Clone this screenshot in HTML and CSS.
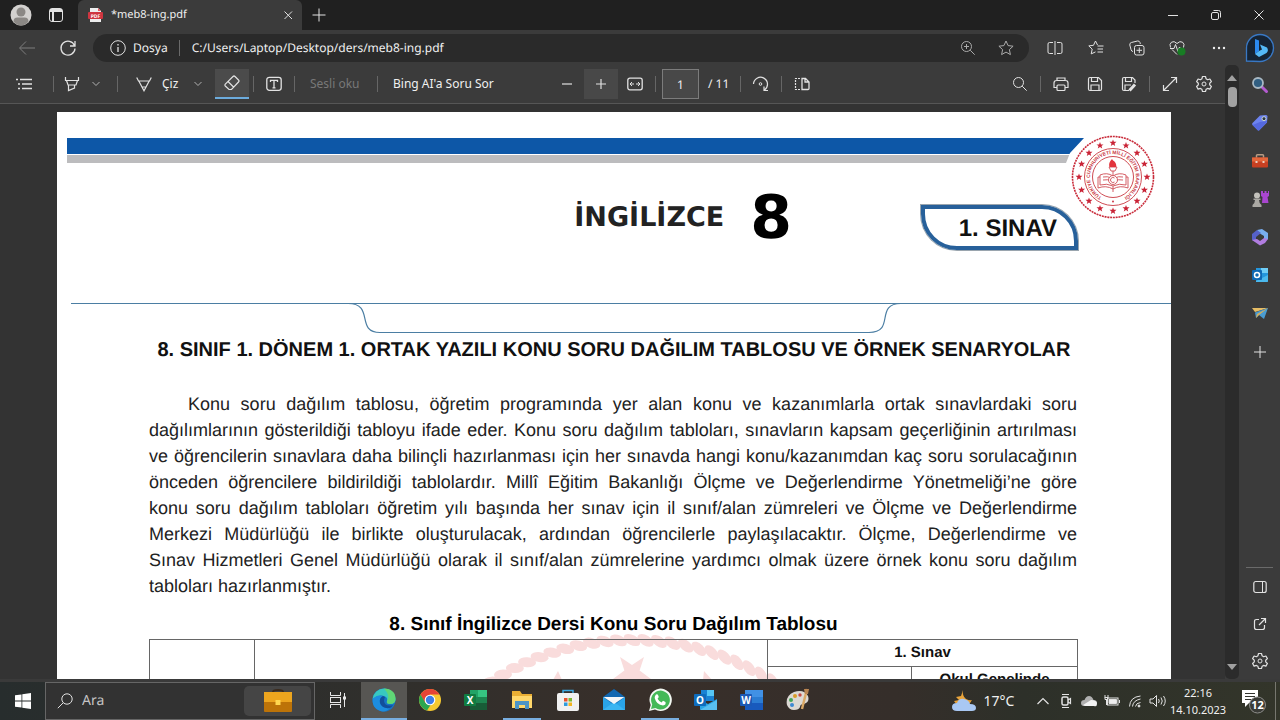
FILE: index.html
```html
<!DOCTYPE html>
<html lang="tr">
<head>
<meta charset="utf-8">
<title>*meb8-ing.pdf</title>
<link rel="stylesheet" href="styles.css">
</head>
<body>
<header class="titlebar">
  <button class="profile" aria-label="Profil"><svg width="22" height="22" viewBox="0 0 22 22"><circle cx="11" cy="11" r="10.500" fill="#d3d1cf"/><circle cx="11" cy="8" r="4.500" fill="#8b8885"/><path d="M3.500 17.500q0-4 4-4h7q4 0 4 4q-3 4-7.500 4t-7.500-4z" fill="#8b8885"/></svg></button>
  <button class="workspaces" aria-label="Sekme eylemleri"><svg class="ic" width="16" height="16" viewBox="0 0 16 16"><rect x="1.500" y="1.500" width="13" height="13" rx="2.500"/><path d="M2 3h12M2 4h12M5 4v10" stroke-width="2"/></svg></button>
  <div class="tab">
    <svg width="15" height="16" viewBox="0 0 15 16"><path d="M2 1h8l3 3v11H2z" fill="#eee"/><path d="M10 1v3h3z" fill="#e35b62"/><rect x="0" y="5" width="15" height="7" rx="1" fill="#cf3540"/><text x="7.500" y="10.500" class="pdf-mark">PDF</text></svg>
    <span class="tab-title">*meb8-ing.pdf</span>
    <button class="tab-close" aria-label="Sekmeyi kapat"><svg class="ic" width="16" height="16" viewBox="0 0 16 16"><path d="M4.500 4.500l7.500 7.500M12 4.500L4.500 12"/></svg></button>
  </div>
  <button class="new-tab" aria-label="Yeni sekme"><svg class="ic" width="16" height="16" viewBox="0 0 16 16"><path d="M8 1.500v13M1.500 8h13"/></svg></button>
  <div class="window-controls">
    <button aria-label="Küçült"><svg class="ic" width="12" height="12" viewBox="0 0 12 12"><path d="M1 6.500h10"/></svg></button>
    <button aria-label="Önceki boyut"><svg class="ic" width="12" height="12" viewBox="0 0 12 12"><rect x="1.500" y="3.500" width="7" height="7" rx="1.500"/><path d="M3.500 1.500h5q2 0 2 2v5"/></svg></button>
    <button aria-label="Kapat"><svg class="ic" width="12" height="12" viewBox="0 0 12 12"><path d="M1.500 1.500l9 9M10.500 1.500l-9 9"/></svg></button>
  </div>
</header>

<nav class="address-row">
  <button class="nav-btn back" aria-label="Geri"><svg class="ic" width="18" height="16" viewBox="0 0 18 16"><path d="M17 8H2M8 1.500L1.500 8L8 14.500"/></svg></button>
  <button class="nav-btn" aria-label="Yenile"><svg class="ic" width="18" height="18" viewBox="0 0 18 18"><path d="M15.500 6.500A7 7 0 1 0 16 9.500M16 2v5h-5" stroke-width="1.300"/></svg></button>
  <div class="omnibox">
    <svg class="ic" width="16" height="16" viewBox="0 0 16 16"><circle cx="8" cy="8" r="7.300"/><path d="M8 7v5M8 4v1.500" stroke-width="1.300"/></svg>
    <label class="scheme" for="url">Dosya</label>
    <input id="url" class="url" value="C:/Users/Laptop/Desktop/ders/meb8-ing.pdf">
    <button class="dim" aria-label="Yakınlaştır"><svg class="ic" width="16" height="16" viewBox="0 0 16 16"><circle cx="6.500" cy="6.500" r="5"/><path d="M10.200 10.200l4.500 4.500M6.500 4v5M4 6.500h5"/></svg></button>
    <button class="dim" aria-label="Sık kullanılanlara ekle"><svg class="ic" width="16" height="16" viewBox="0 0 16 16"><path d="M8 1l2.100 4.600 5 .6-3.700 3.400 1 5L8 12.100 3.600 14.600l1-5L.9 6.200l5-.6z"/></svg></button>
  </div>
  <div class="browser-tools">
    <button aria-label="Bölünmüş ekran"><svg class="ic" width="16" height="16" viewBox="0 0 16 16"><path d="M6 2.500H2.500q-1.500 0-1.500 1.500v8q0 1.500 1.500 1.500H6M10 2.500h3.500q1.500 0 1.500 1.500v8q0 1.500-1.500 1.500H10M8 1v14"/></svg></button>
    <button aria-label="Sık kullanılanlar"><svg class="ic" width="16" height="16" viewBox="0 0 16 16"><path d="M9.500 5L7.500 1 5.500 5.300.8 5.900l3.400 3.200-1 4.800 4.300-2M9.500 6h6M9.500 9h5.500M9.500 12h5.500"/></svg></button>
    <button aria-label="Koleksiyonlar"><svg class="ic" width="16" height="16" viewBox="0 0 16 16"><rect x="5.500" y="5.500" width="9.500" height="9.500" rx="2"/><path d="M10.300 7.500v5.500M7.500 10.300h5.500M4 11.500Q2.500 11.500 2 9.500L.8 5Q.5 3 2.300 2.500L8.500 1Q10.500.8 11 2.500L11.300 4"/></svg></button>
    <button aria-label="Tarayıcı temel parçaları"><svg class="ic" width="17" height="16" viewBox="0 0 17 16"><path d="M1.500 7.500Q0 4 2.500 2.200T8 3.500Q11 .5 13.500 2.200T14.500 7.500M3 9.500l5 5M1 8.500h4l1.500-4 2.500 7 1.500-4.500 1 1.500H15"/><circle cx="12.500" cy="11.500" r="4" fill="#187d24" stroke="none"/></svg></button>
    <button aria-label="Ayarlar ve daha fazlası"><svg width="16" height="16" viewBox="0 0 16 16" fill="#eee"><circle cx="3" cy="8" r="1.200"/><circle cx="8" cy="8" r="1.200"/><circle cx="13" cy="8" r="1.200"/></svg></button>
  </div>
  <button class="bing" aria-label="Bing Sohbet"><svg width="30" height="30" viewBox="0 0 30 30"><path d="M1.500 28V15A13.500 13.500 0 1 1 15 28.500z" fill="#162434" stroke="#3978c4" stroke-width="1.300"/><path d="M10 6l4 1.500V18l-4 3z" fill="#2b8af0"/><path d="M10 21l4-3 3-1.500-2-5 7 3q2 3-.5 5.500L14 24z" fill="#54b9f7"/></svg></button>
</nav>

<div class="workspace">
  <main class="viewer">
    <div class="pdfbar">
      <button class="tool" aria-label="İçindekiler"><svg class="ic" width="18" height="14" viewBox="0 0 18 14"><path d="M5 2.500h12M7 7h10M7 11.500h10M1 2.500h2M3 7h2M3 11.500h2" stroke-width="1.300"/></svg></button>
      <span class="sep wide-left"></span>
      <button class="tool narrow" aria-label="Vurgula"><svg class="ic" width="16" height="16" viewBox="0 0 16 16"><path d="M1.500 1v3.500h13V1M2.500 4.500l1.500 4.500h8l1.500-4.500M4.500 9v5.500l6-2.500V9" stroke-width="1.200"/></svg></button>
      <button class="chev" aria-label="Vurgu rengi"><svg class="ic" width="8" height="8" viewBox="0 0 8 8"><path d="M.5 2l3.500 3.500L7.500 2"/></svg></button>
      <span class="sep wide-left wide-right"></span>
      <button class="draw"><svg class="ic" width="16" height="16" viewBox="0 0 16 16"><path d="M.7 1.500l1.800 3.500h11l1.800-3.500M2.800 5L8 14.800 13.200 5M6 11h4" stroke-width="1.200"/></svg>Çiz</button>
      <button class="chev" aria-label="Kalem seçenekleri"><svg class="ic" width="8" height="8" viewBox="0 0 8 8"><path d="M.5 2l3.500 3.500L7.500 2"/></svg></button>
      <button class="tool eraser" aria-label="Sil"><svg class="ic" width="16" height="16" viewBox="0 0 16 16"><path d="M1.300 9.200L9 1.500q1-1 2 0l3.500 3.500q1 1 0 2L7.500 14.500H5L1.300 11q-.8-.9 0-1.800zM4 6.500l5.500 5.500" stroke-width="1.200"/></svg></button>
      <span class="sep"></span>
      <button class="tool" aria-label="Metin ekle"><svg class="ic" width="16" height="16" viewBox="0 0 16 16"><rect x=".8" y="1.300" width="14.400" height="13" rx="2.500" stroke-width="1.300"/><path d="M4.500 6V4.300h7V6M8 4.300v7.500M6.500 11.800h3" stroke-width="1.300"/></svg></button>
      <span class="sep"></span>
      <button class="label read" disabled>Sesli oku</button>
      <span class="sep"></span>
      <button class="label ask">Bing AI'a Soru Sor</button>
      <div class="zoom-group">
        <button class="tool" aria-label="Uzaklaştır"><svg class="ic" width="12" height="12" viewBox="0 0 12 12"><path d="M1 6h10" stroke-width="1.200"/></svg></button>
        <button class="tool hover" aria-label="Yakınlaştır"><svg class="ic" width="12" height="12" viewBox="0 0 12 12"><path d="M1 6h10M6 1v10" stroke-width="1.200"/></svg></button>
        <button class="tool" aria-label="Sayfaya sığdır"><svg class="ic" width="16" height="14" viewBox="0 0 16 14"><rect x=".8" y="1.200" width="14.400" height="11.600" rx="2" stroke-width="1.300"/><path d="M3 7h4M9 7h4M5 5L3 7l2 2M11 5l2 2-2 2"/></svg></button>
        <span class="sep"></span>
        <input id="pg" class="page-no" value="1">
        <label class="page-count" for="pg">/ 11</label>
        <span class="sep"></span>
        <button class="tool" aria-label="Döndür"><svg class="ic" width="18" height="16" viewBox="0 0 18 16"><path d="M1.500 8A7 7 0 1 1 12.500 14M12 10.500v4h4" stroke-width="1.200"/><circle cx="8.500" cy="8" r="1.300"/></svg></button>
        <span class="sep"></span>
        <button class="tool" aria-label="Sayfa görünümü"><svg class="ic" width="16" height="14" viewBox="0 0 16 14"><path d="M8 1.500h3.500L15 5v6.500q0 1-1 1H8zM11 1.500V5h4" stroke-width="1.300"/><path d="M6 1.500H1.500v11H6" stroke-dasharray="2 1" stroke-width="1.200"/></svg></button>
      </div>
      <div class="file-group">
        <button class="tool" aria-label="Bul"><svg class="ic" width="16" height="16" viewBox="0 0 16 16"><circle cx="6.500" cy="6.500" r="5"/><path d="M10.200 10.200l4.500 4.500"/></svg></button>
        <span class="sep"></span>
        <button class="tool" aria-label="Yazdır"><svg class="ic" width="16" height="16" viewBox="0 0 16 16"><path d="M4 4.500V2h8v2.500M4 11.500H1V7q0-2.500 2.500-2.500h9Q15 4.500 15 7v4.500h-3" stroke-width="1.200"/><rect x="4" y="9" width="8" height="5.500" rx="1" stroke-width="1.200"/></svg></button>
        <button class="tool" aria-label="Kaydet"><svg class="ic" width="16" height="16" viewBox="0 0 16 16"><path d="M3 1.500h8.500l3 3V13q0 1.500-1.500 1.500H3q-1.500 0-1.500-1.500V3q0-1.500 1.500-1.500zM4.500 1.500v4h6v-4M4 14.500V9h8v5.500" stroke-width="1.200"/></svg></button>
        <button class="tool" aria-label="Farklı kaydet"><svg class="ic" width="16" height="16" viewBox="0 0 16 16"><path d="M8 14.500H3q-1.500 0-1.500-1.500V3q0-1.500 1.500-1.500h8.500l2.500 2.500v3M4.500 1.500v4h6v-4M4 14.500V9h6" stroke-width="1.200"/><path d="M8.500 14.500L14 8.500" stroke-width="3"/></svg></button>
        <span class="sep"></span>
        <button class="tool" aria-label="Tam ekran"><svg class="ic" width="16" height="16" viewBox="0 0 16 16"><path d="M2 14L14 2M9 1.500h5.500V7M1.500 9v5.500H7" stroke-width="1.200"/></svg></button>
        <button class="tool" aria-label="Ayarlar"><svg class="ic" width="18" height="18" viewBox="0 0 18 18"><path id="gear" d="M7.500 1.500h3l.6 2.300 1.500.9 2.300-.7 1.500 2.600-1.700 1.600v1.700l1.700 1.600-1.500 2.600-2.300-.7-1.500.9-.6 2.200h-3l-.6-2.200-1.500-.9-2.300.7-1.500-2.600 1.700-1.600V8.200L1.600 6.600 3.100 4l2.300.7 1.500-.9z" stroke-linejoin="round" stroke-width="1.200"/><circle cx="9" cy="9" r="2"/></svg></button>
      </div>
    </div>

    <div class="canvas">
      <article class="page">
        <div class="page-top">
          <div class="bands"><div class="band-blue"></div><div class="band-gray"></div></div>
          <svg class="seal" width="84" height="84" viewBox="-42 -42 84 84">
            <defs>
              <path id="star" d="M0-3.500l.9 2.300H3.500L1.500.5 2.200 3 0 1.500-2.200 3-1.500.5-3.500-1.200H-.9z"/>
              <path id="ring" d="M-5.500 22.400A23 23 0 1 1 5.500 22.400"/>
            </defs>
            <circle r="40.500" fill="#fff" stroke="#c92b3a" stroke-width="1.600" stroke-dasharray="2 .8"/>
            <circle r="28.500" class="seal-line"/><circle r="20.500" class="seal-line"/>
            <g fill="#c92336">
              <use href="#star" transform="translate(0 -34)"/><use href="#star" transform="translate(13 -31.400)"/><use href="#star" transform="translate(24 -24)"/><use href="#star" transform="translate(31.400 -13)"/><use href="#star" transform="translate(34 0)"/><use href="#star" transform="translate(31.400 13)"/><use href="#star" transform="translate(24 24)"/><use href="#star" transform="translate(13 31.400)"/><use href="#star" transform="translate(0 34)"/><use href="#star" transform="translate(-13 31.400)"/><use href="#star" transform="translate(-24 24)"/><use href="#star" transform="translate(-31.400 13)"/><use href="#star" transform="translate(-34 0)"/><use href="#star" transform="translate(-31.400 -13)"/><use href="#star" transform="translate(-24 -24)"/><use href="#star" transform="translate(-13 -31.400)"/>
            </g>
            <circle cy="24.500" r=".9" fill="#c92336"/>
            <text class="seal-text"><textPath href="#ring" startOffset="50%">TÜRKİYE CUMHURİYETİ MİLLÎ EĞİTİM BAKANLIĞI</textPath></text>
            <g fill="none" stroke="#cf4d55" stroke-width=".9">
              <path d="M0-1Q-6-5-13-2V8Q-6 6 0 9Q6 6 13 8V-2Q6-5 0-1zM-13 0h-2v11q8-3 15 1q7-4 15-1V0h-2M-10 0q5-1 8 1M-10 3q5-1 8 1M10 0q-5-1-8 1M10 3q-5-1-8 1M0 9v6"/>
              <circle cy="3" r="4.500" fill="#fff"/><path d="M1.500 1a2.500 2.500 0 1 0 0 4"/>
              <path d="M-4-10h8L2-6h-4zM0-6v4"/>
            </g>
            <path d="M-3.500-10Q-5-14-1-18q1 2 2 2q3 3 2 6z" fill="#e2333c"/>
          </svg>
        </div>
        <div class="title-row">
          <h1 class="subject">İNGİLİZCE <span class="grade">8</span></h1>
          <div class="exam">1. SINAV</div>
        </div>
        <svg class="divider" height="32" viewBox="0 0 1100 32" preserveAspectRatio="none"><path d="M0 1.500H1100M277 1.500C304 1.500 284 30.500 309 30.500H798C825 30.500 803 1.500 830 1.500" fill="none" stroke="#4b7ea3" stroke-width="1.200"/></svg>
        <h2 class="heading">8. SINIF 1. DÖNEM 1. ORTAK YAZILI KONU SORU DAĞILIM TABLOSU VE ÖRNEK SENARYOLAR</h2>
        <p class="para">
          <span class="line first">Konu soru dağılım tablosu, öğretim programında yer alan konu ve kazanımlarla ortak sınavlardaki soru</span>
          <span class="line">dağılımlarının gösterildiği tabloyu ifade eder. Konu soru dağılım tabloları, sınavların kapsam geçerliğinin artırılması</span>
          <span class="line">ve öğrencilerin sınavlara daha bilinçli hazırlanması için her sınavda hangi konu/kazanımdan kaç soru sorulacağının</span>
          <span class="line">önceden öğrencilere bildirildiği tablolardır. Millî Eğitim Bakanlığı Ölçme ve Değerlendirme Yönetmeliği’ne göre</span>
          <span class="line">konu soru dağılım tabloları öğretim yılı başında her sınav için il sınıf/alan zümreleri ve Ölçme ve Değerlendirme</span>
          <span class="line">Merkezi Müdürlüğü ile birlikte oluşturulacak, ardından öğrencilerle paylaşılacaktır. Ölçme, Değerlendirme ve</span>
          <span class="line">Sınav Hizmetleri Genel Müdürlüğü olarak il sınıf/alan zümrelerine yardımcı olmak üzere örnek konu soru dağılım</span>
          <span class="line last">tabloları hazırlanmıştır.</span>
        </p>
        <div class="table-wrap">
          <svg class="watermark" width="300" height="60" viewBox="-150 -267 300 60">
            <defs><ellipse id="bead" cx="0" cy="-258" rx="9" ry="5" transform="rotate(28 0 -258)"/></defs>
            <g fill="#f9dcdc">
              <use href="#bead" transform="rotate(-33)"/><use href="#bead" transform="rotate(-30)"/><use href="#bead" transform="rotate(-27)"/><use href="#bead" transform="rotate(-24)"/><use href="#bead" transform="rotate(-21)"/><use href="#bead" transform="rotate(-18)"/><use href="#bead" transform="rotate(-15)"/><use href="#bead" transform="rotate(-12)"/><use href="#bead" transform="rotate(-9)"/><use href="#bead" transform="rotate(-6)"/><use href="#bead" transform="rotate(-3)"/><use href="#bead"/><use href="#bead" transform="rotate(3)"/><use href="#bead" transform="rotate(6)"/><use href="#bead" transform="rotate(9)"/><use href="#bead" transform="rotate(12)"/><use href="#bead" transform="rotate(15)"/><use href="#bead" transform="rotate(18)"/><use href="#bead" transform="rotate(21)"/><use href="#bead" transform="rotate(24)"/><use href="#bead" transform="rotate(27)"/><use href="#bead" transform="rotate(30)"/><use href="#bead" transform="rotate(33)"/>
              <path transform="translate(0 -225)" d="M0 20L-4.700 6.500-19 6-7.600-2.500-12-16 0-8 12-16 7.600-2.500 19 6 4.700 6.500z"/>
              <path d="M-74-227l4 9h-9zM72-227l-1 9h9z"/>
            </g>
          </svg>
          <table class="dist">
            <caption>8. Sınıf İngilizce Dersi Konu Soru Dağılım Tablosu</caption>
            <colgroup><col class="c1"><col class="c2"><col class="c3"><col class="c4"></colgroup>
            <tbody>
              <tr><td rowspan="2"></td><td rowspan="2"></td><th colspan="2">1. Sınav</th></tr>
              <tr><td></td><th>Okul Genelinde</th></tr>
            </tbody>
          </table>
        </div>
      </article>
    </div>
  </main>

  <div class="scrollbar"><svg width="10" height="6" viewBox="0 0 10 6"><path d="M5 0l5 6H0z" fill="#a0a0a0"/></svg><div class="thumb"></div><svg class="down" width="10" height="6" viewBox="0 0 10 6"><path d="M5 6l5-6H0z" fill="#a0a0a0"/></svg></div>

  <aside class="sidebar">
    <button aria-label="Ara"><svg width="18" height="18" viewBox="0 0 18 18"><path d="M10.500 10.500l5 5" stroke="#b45bd0" stroke-width="3" stroke-linecap="round"/><circle cx="7" cy="7" r="5" fill="#315f82" stroke="#a9b9c4" stroke-width="1.800"/></svg></button>
    <button aria-label="Alışveriş"><svg width="18" height="18" viewBox="0 0 18 18"><path d="M9 1.500l6-.5q1.500 0 1.500 1.500L16 8.500 8.500 16q-1 1-2 0L1.500 11q-1-1 0-2z" fill="#6d83ef"/><path d="M1.500 11l7.500-3 7-1-.2 1.500L8.500 16q-1 1-2 0z" fill="#5569df"/><circle cx="13" cy="4.700" r="2" fill="#2e3745" stroke="#c9d7cf"/></svg></button>
    <button aria-label="Araçlar"><svg width="18" height="18" viewBox="0 0 18 18"><path d="M5.500 6V3.500q0-.8.800-.8h5.400q.8 0 .8.800V6" fill="none" stroke="#b69a83" stroke-width="1.500"/><rect x="1" y="5.500" width="16" height="10" rx="1" fill="#c74022"/><rect x="1" y="5.500" width="16" height="4" fill="#e3663b"/><path d="M4.500 9h2v2h-2zM11.500 9h2v2h-2z" fill="#ead1c4"/></svg></button>
    <button aria-label="Oyunlar"><svg width="18" height="18" viewBox="0 0 18 18"><path d="M10 1h2v2h1.500V1h2v2H17V1h1v5l-1.500 1 1 6H11l.5-6L10 6z" fill="#a946cf"/><circle cx="6" cy="5.500" r="3" fill="#c3c1bb"/><path d="M2.500 8.500h7v1.500H8q0 3 2.500 5V17h-9v-2Q4 13 4 10H2.500z" fill="#aaa8a3"/></svg></button>
    <button aria-label="Microsoft 365"><svg width="18" height="18" viewBox="0 0 18 18"><path d="M6 2l5-1 6 4v6l-4 2V8L8 5z" fill="#78aef0"/><path d="M6 2L1 6v6l4 2V9l5-4z" fill="#5561c9"/><path d="M1 12l5-1 3 2 4-3 4 1-3 4-5 2.500z" fill="#b17de0"/></svg></button>
    <button aria-label="Outlook"><svg width="18" height="18" viewBox="0 0 18 18"><path d="M5 2h11l1 1v12q0 1-1 1H5z" fill="#2496dc"/><path d="M10 2h7v5h-7z" fill="#70cdf5"/><path d="M5 15l12-6v6q0 1-1 1H5z" fill="#4bb9ed"/><rect x="1" y="4" width="10" height="10" rx="1" fill="#0f69b5"/><circle cx="6" cy="9" r="2.500" fill="none" stroke="#fff" stroke-width="1.500"/></svg></button>
    <button aria-label="Bırak"><svg width="18" height="18" viewBox="0 0 18 18"><path d="M1 4h16L4 8z" fill="#e6bd65"/><path d="M17 4L4 8.500 5 14l3-3 5 4z" fill="#4a9bd0"/><path d="M17 4L6 10l-1 4 3-3z" fill="#d6ae59"/></svg></button>
    <button class="add" aria-label="Özelleştir"><svg class="ic" width="14" height="14" viewBox="0 0 14 14"><path d="M7 1v12M1 7h12"/></svg></button>
    <div class="side-bottom">
      <button aria-label="Kenar çubuğu"><svg class="ic" width="14" height="14" viewBox="0 0 14 14"><rect x=".8" y="1.500" width="12.400" height="11" rx="2" stroke-width="1.200"/><path d="M9.500 1.500v11"/></svg></button>
      <button aria-label="Yeni pencerede aç"><svg class="ic" width="14" height="14" viewBox="0 0 14 14"><path d="M6 2.500H3.500q-2 0-2 2v6q0 2 2 2h6q2 0 2-2V8M8 1.500h4.500V6M12.500 1.500L6 8" stroke-width="1.200"/></svg></button>
      <button aria-label="Kenar çubuğu ayarları"><svg class="ic" width="18" height="18" viewBox="0 0 18 18"><use href="#gear"/><circle cx="9" cy="9" r="2"/></svg></button>
    </div>
  </aside>
</div>

<footer class="taskbar">
  <button class="start" aria-label="Başlat"><svg width="16" height="16" viewBox="0 0 16 16" fill="#fff"><path d="M0 2.300l6.500-.9v6.100H0zM7.300 1.300L16 0v7.500H7.300zM0 8.400h6.500v6.100L0 13.700zM7.300 8.400H16V16l-8.700-1.300z"/></svg></button>
  <div class="search">
    <svg class="ic" width="16" height="16" viewBox="0 0 16 16"><circle cx="10" cy="6" r="5.200"/><path d="M6.300 9.700L.8 15.200"/></svg>
    <input aria-label="Arama" placeholder="Ara">
    <span class="highlight"><svg width="30" height="24" viewBox="0 0 30 24"><path d="M10 3q0-2 5-2t5 2" fill="none" stroke="#3a2a1c" stroke-width="2"/><rect x="1" y="3" width="28" height="20" rx="1" fill="#bd7308"/><path d="M1 3h28v10H1z" fill="#eda51e"/><rect x="12.500" y="11" width="5" height="5" fill="#ffd750"/></svg></span>
  </div>
  <div class="apps">
    <button aria-label="Görev görünümü"><svg width="18" height="16" viewBox="0 0 18 16" fill="none" stroke="#e8e8e8"><path d="M1.500 0v3.500h10V0M1.500 16v-3.500h10V16M15.500 1v14" /><rect x="1.500" y="5.500" width="10" height="5"/><path d="M14 6h3" stroke-width="3"/></svg></button>
    <button class="active" aria-label="Edge"><svg width="24" height="24" viewBox="0 0 24 24"><circle cx="12" cy="12" r="11.500" fill="#1673c5"/><path d="M.6 11A11.500 11.500 0 0 1 23.500 11q0 5-5.500 5-4 0-3-3 1-3-2-4.500Q7 5.500.6 11z" fill="#38c8c0"/><path d="M12 .5Q23.500 1 23.500 11q0 5-5.500 5-4 0-3-3 4-5-3-12.500z" fill="#60d676"/><path d="M.6 11Q5 6 11 8q-4 2-3 7 2 6 10 5-3 3.500-7 3.400Q0 22 .6 11z" fill="#1d8ddf"/><path d="M11 8q-4 2-3 7 2 6 10 5 2-1 3-3-8 2-9-4 0-2 1-4z" fill="#124f9b"/></svg></button>
    <button aria-label="Chrome"><svg width="22" height="22" viewBox="0 0 22 22"><circle cx="11" cy="11" r="11" fill="#f5c930"/><path d="M1.500 5.500A11 11 0 0 1 20.500 5.500H11L6 14z" fill="#e54436"/><path d="M1.500 5.500L6.500 14l5 2-3.500 5.500A11 11 0 0 1 1.500 5.500z" fill="#2ca650"/><circle cx="11" cy="11" r="5.300" fill="#fff"/><circle cx="11" cy="11" r="4.200" fill="#3d7ee6"/></svg></button>
    <button aria-label="Excel"><svg width="24" height="20" viewBox="0 0 24 20"><path d="M6 0h17v20H6z" fill="#1d8550"/><path d="M14 0h9v7h-9z" fill="#36c481"/><path d="M6 0h8v7H6z" fill="#22a366"/><path d="M6 13h17v7H6z" fill="#185c37"/><rect y="4" width="12" height="12" rx="1" fill="#107c41"/><text x="6" y="13.500" class="app-letter">X</text></svg></button>
    <button class="open" aria-label="Dosya Gezgini"><svg width="22" height="20" viewBox="0 0 22 20"><path d="M1 1h8l2 3h10v13H1z" fill="#e9ae34"/><path d="M1 6h20v12H1z" fill="#ffd76b"/><path d="M4 19v-8h14v8h-4v-4H8v4z" fill="#4d95c6"/></svg></button>
    <button aria-label="Mağaza"><svg width="22" height="22" viewBox="0 0 22 22"><path d="M6 5V1.500h10V5" fill="none" stroke="#3ba9e2" stroke-width="1.500"/><rect y="4" width="22" height="18" rx="2" fill="#f1f1f1"/><path d="M7 9h3.500v3.500H7z" fill="#e8532d"/><path d="M11.500 9H15v3.500h-3.500z" fill="#7db733"/><path d="M7 13.500h3.500V17H7z" fill="#2d9bdc"/><path d="M11.500 13.500H15V17h-3.500z" fill="#f3b51f"/></svg></button>
    <button aria-label="Posta"><svg width="24" height="22" viewBox="0 0 24 22"><path d="M1 8l11-8 11 8v13H1z" fill="#1167b1"/><path d="M1 8l11 8 11-8v13H1z" fill="#2aa4e8"/><path d="M1 21l11-8 11 8z" fill="#3bb5f2"/><path d="M1.500 8h21L12 15z" fill="#f4f6f8"/></svg></button>
    <button class="open" aria-label="WhatsApp"><svg width="24" height="24" viewBox="0 0 24 24"><path d="M1 23l1.700-6A11.200 11.200 0 1 1 7 21.500z" fill="#f2f8f2"/><path d="M3 21l1.200-4.500A9.400 9.400 0 1 1 7.500 20z" fill="#44b957"/><path d="M8 6.500q1.500-.8 2 .5l.8 2-1.200 1.700q1.400 2.700 4 3.700l1.400-1.600 2.500 1.200q.8 3-2.500 3.500Q8.500 17 6.700 10 6.500 8 8 6.500z" fill="#fff"/></svg></button>
    <button aria-label="Outlook"><svg width="24" height="22" viewBox="0 0 24 22"><path d="M7 1h13v11H7z" fill="#1a82d3"/><path d="M13 1h7v6h-7z" fill="#56c6f5"/><path d="M6 11l8 4 9-5v10q0 1-1 1H7q-1 0-1-1z" fill="#29a5e6"/><path d="M6 21l17-10v10z" fill="#59bff0"/><rect y="5" width="12" height="12" rx="1" fill="#0f6cbd"/><text x="6" y="14.500" class="app-letter">O</text></svg></button>
    <button aria-label="Word"><svg width="24" height="20" viewBox="0 0 24 20"><path d="M5 0h18v20H5z" fill="#185abd"/><path d="M5 0h18v7H5z" fill="#4191e5"/><path d="M5 7h18v6H5z" fill="#2b7cd3"/><rect y="4" width="12" height="12" rx="1" fill="#1b59b5"/><text x="6" y="13.500" class="app-letter">W</text></svg></button>
    <button aria-label="Paint"><svg width="24" height="24" viewBox="0 0 24 24"><path d="M1 17Q-1 8 8 4q10-3 14 4 2 6-4 8-4 0-4 3-1 3-6 3-5 0-7-5z" fill="#dcd9d4"/><circle cx="5" cy="12" r="2" fill="#45a657"/><circle cx="9" cy="8" r="2" fill="#db9c28"/><circle cx="14" cy="7" r="1.700" fill="#c64b45"/><circle cx="6" cy="17" r="2" fill="#3e8ad3"/><path d="M21 1l-5 20" stroke="#d9a866" stroke-width="2.500"/><path d="M18 1h5l-1 5h-3z" fill="#ba8652"/></svg></button>
  </div>
  <div class="tray">
    <button class="weather"><svg width="24" height="22" viewBox="0 0 24 22"><path d="M11 0q-1 6 3 9 4 2 6 1-3 6-9 6-7-1-9-5l5-1-3-3 5-1z" fill="#e8a33a"/><path d="M5 21q-5 0-5-4t5-4q2-5 7-4t6 5q6 0 6 4 0 3-4 3z" fill="#a9c8f3"/></svg>17°C</button>
    <button aria-label="Gizli simgeler"><svg class="ic" width="14" height="14" viewBox="0 0 14 14"><path d="M1.500 10L7 4.500 12.500 10" stroke-width="1.200"/></svg></button>
    <button aria-label="Kamera"><svg class="ic" width="14" height="16" viewBox="0 0 14 16"><rect x="3" y="4" width="6" height="8" rx="1.500" stroke-width="1.500"/><path d="M9 7l2.500-1.500v5L9 9M3 1.500h7M3 14.500h7" stroke-width="1.200"/></svg></button>
    <button aria-label="OneDrive"><svg width="16" height="12" viewBox="0 0 16 12"><path d="M3 11q-3 0-3-3t3.500-3Q5 1 8 1t4.500 4Q16 5 16 8t-3 3z" fill="#b0b0b0"/><path d="M2 10l8-5q6 0 6 3.500T13 11H4z" fill="#f2f2f2"/></svg></button>
    <button aria-label="Pil"><svg class="ic" width="16" height="14" viewBox="0 0 16 14"><rect x="3.500" y="4" width="10.500" height="7"/><path d="M5 5.500h7.500v4H5z" fill="#eee"/><path d="M15.500 6v3M1 1v3M4 1v3M1 3.500h3v2H1zM2.500 6v5"/></svg></button>
    <button aria-label="Wi-Fi"><svg class="ic" width="14" height="14" viewBox="0 0 14 14"><path d="M1.500 12.500Q2 3 12.500 2M4.500 12.500Q5 6.500 12.500 5M7.500 12.500Q8 9 12.500 8.500" /><circle cx="11" cy="12" r="1" fill="#eee"/></svg></button>
    <button aria-label="Ses"><svg class="ic" width="18" height="14" viewBox="0 0 18 14"><path d="M1 5h3l3.500-3.500v11L4 9H1zM9.500 5q1.500 2 0 4M12 3.500q2.500 3.500 0 7M14.500 2q3.500 5 0 10"/></svg></button>
    <button class="clock"><span>22:16</span><span>14.10.2023</span></button>
    <button class="notif" aria-label="Bildirimler"><svg width="26" height="26" viewBox="0 0 26 26"><path d="M1 2h16v13H8l-4 4v-4H1z" fill="#fff"/><path d="M4 5.500h10M4 8.500h10M4 11.500h6" stroke="#34352f"/><circle cx="16.500" cy="17" r="8" fill="#3a3b36" stroke="#8d8d8a"/><text x="16.500" y="21" class="badge">12</text></svg></button>
    <span class="desktop-edge"></span>
  </div>
</footer>
</body>
</html>
```
FILE: styles.css
```css
* { box-sizing: border-box; }
body {
  margin: 0;
  height: 100vh;
  display: flex;
  flex-direction: column;
  overflow: hidden;
  background: #3b3b3b;
  color: #f0f0f0;
  font: 12px/18px "Noto Sans", "Open Sans", sans-serif;
  text-rendering: geometricPrecision;
}
button {
  display: flex;
  align-items: center;
  justify-content: center;
  padding: 0;
  border: 0;
  background: none;
  color: inherit;
  font: inherit;
  white-space: nowrap;
  flex: none;
}
input { border: 0; background: none; color: inherit; font: inherit; padding: 0; min-width: 0; text-rendering: inherit; }
svg { flex: none; }
.ic { fill: none; stroke: #e2e2e2; }

/* Title bar */
.titlebar { display: flex; flex: none; height: 30px; background: #202020; }
.profile { width: 41px; }
.workspaces { width: 30px; margin-right: 7px; }
.tab {
  display: flex;
  align-items: center;
  gap: 8px;
  width: 224px;
  padding: 0 6px 0 10px;
  border-radius: 6px 6px 0 0;
  background: #3b3b3b;
}
.pdf-mark { font: bold 5px "Noto Sans", sans-serif; fill: #fff; text-anchor: middle; }
.tab-title { flex: 1; font-size: 11px; }
.new-tab { width: 34px; }
.window-controls { display: flex; margin-left: auto; }
.window-controls button { width: 43px; }

/* Address row */
.address-row { display: flex; flex: none; align-items: center; height: 35px; padding-left: 6px; }
.nav-btn { width: 41px; }
.back { opacity: .4; }
.omnibox {
  display: flex;
  flex: 1;
  align-items: center;
  height: 28px;
  margin-left: 5px;
  padding: 0 11px 0 17px;
  border-radius: 14px;
  background: #2a2a2a;
}
.scheme { margin-left: 7px; padding-right: 11px; border-right: 1px solid #6a6a6a; line-height: 16px; }
.url { flex: 1; margin-left: 12px; }
.dim { width: 24px; margin-left: 14px; opacity: .7; }
.browser-tools { display: flex; padding-left: 5px; }
.browser-tools button { width: 41px; }
.bing { width: 41px; }

/* Workspace */
.workspace { display: flex; flex: 1; min-height: 0; }
.viewer { display: flex; flex: 1; flex-direction: column; min-width: 0; }
.pdfbar {
  display: flex;
  flex: none;
  align-items: center;
  height: 39px;
  padding-left: 7px;
  border-bottom: 1px solid #565656;
}
.tool { width: 34px; height: 30px; }
.narrow { width: 30px; }
.chev { width: 18px; height: 30px; opacity: .7; }
.sep { flex: none; width: 1px; height: 16px; margin: 0 3px; background: #666; }
.wide-left { margin-left: 12px; }
.wide-right { margin-right: 18px; }
.draw { width: 53px; gap: 10px; justify-content: flex-start; }
.eraser { margin: 0 1px 0 8px; background: #4b4b4b; border-bottom: 2px solid #6cabdc; }
.label { padding: 0 12px; justify-content: flex-start; }
.label:disabled { color: #787878; }
.read { min-width: 76px; }
.ask { min-width: 126px; }
.zoom-group, .file-group { display: flex; align-items: center; }
.zoom-group { margin-left: 43px; }
.file-group { margin-left: auto; padding-right: 4px; }
.hover { background: #484848; }
.page-no {
  width: 37px;
  height: 30px;
  margin-left: 3px;
  border: 1px solid #7c7c7c;
  background: #484848;
  text-align: center;
}
.page-count { margin: 0 8px 0 9px; }
.canvas { flex: 1; min-height: 0; overflow: hidden; padding: 8px 54px 0 57px; background: #333; }

/* Document page */
.page { background: #fff; color: #111; font-family: "Liberation Sans", Arial, sans-serif; padding-top: 23px; }
.page-top { display: flex; padding: 0 16px 0 10px; }
.bands {
  flex: 1;
  height: 25px;
  margin: 3px -13px 0 0;
  clip-path: polygon(0 0, 100% 0, calc(100% - 14px) 60%, calc(100% - 18px) 100%, 0 100%);
}
.band-blue { height: 16px; margin-bottom: 1px; background: #0d57a7; }
.band-gray { height: 8px; background: #bcbcbe; }
.seal { position: relative; }
.seal-line { fill: none; stroke: #cf4d55; stroke-width: 1; }
.seal-text { font: bold 5px "Liberation Sans", sans-serif; fill: #c93845; text-anchor: middle; }
.title-row { display: flex; align-items: flex-start; justify-content: flex-end; padding-right: 93px; margin-top: -26px; height: 109px; }
.subject { display: flex; align-items: center; gap: 26px; margin: 3px 129px 0 0; font: bold 27px/44px "DejaVu Sans", sans-serif; color: #222; }
.grade { font-size: 60px; color: #000; }
.exam {
  width: 157px;
  height: 45px;
  margin-top: 12px;
  padding-right: 17px;
  border: 4px solid #27609a;
  border-radius: 0 36px 0 36px;
  box-shadow: 0 0 0 1px #9aa5ae;
  font: bold 24px/40px "Liberation Sans", sans-serif;
  text-align: right;
}
.divider { display: block; width: calc(100% - 14px); margin-left: 14px; }
.heading { margin: 4px 0 29px; font: bold 20px/24px "Liberation Sans", sans-serif; text-align: center; white-space: nowrap; }
.para { margin: 0 94px 14px 92px; font-size: 18px; line-height: 26px; color: #222; }
.line { display: block; white-space: nowrap; text-align: justify; text-align-last: justify; }
.first { padding-left: 39px; }
.last { text-align-last: left; }
.table-wrap { position: relative; margin: 0 93px 0 92px; }
.watermark { position: absolute; left: 52%; top: 18px; transform: translateX(-50%); }
.dist { position: relative; width: 100%; table-layout: fixed; border-collapse: collapse; font-size: 15px; line-height: 18px; }
.dist caption { padding-bottom: 2px; font-weight: bold; font-size: 19px; line-height: 24px; color: #000; }
.dist td, .dist th { height: 27px; padding: 4px 0; border: 1px solid #666; }
.c1 { width: 105px; }
.c3 { width: 144px; }
.c4 { width: 166px; }

/* Scrollbar and sidebar */
.scrollbar {
  display: flex;
  flex: none;
  flex-direction: column;
  align-items: center;
  width: 14px;
  padding: 10px 0 9px;
  border-radius: 5px;
  background: #2b2b2b;
}
.thumb { width: 9px; height: 20px; margin-top: 6px; border-radius: 4px; background: #a2a2a2; }
.down { margin-top: auto; }
.sidebar { display: flex; flex: none; flex-direction: column; align-items: center; width: 41px; padding-top: 1px; }
.sidebar button { width: 36px; height: 38px; }
.sidebar .add { margin-top: 1px; }
.side-bottom { display: flex; flex-direction: column; align-items: center; width: 27px; margin-top: auto; border-top: 1px solid #6a6a6a; }
.sidebar .side-bottom button { height: 37px; }

/* Taskbar */
.taskbar {
  display: flex;
  flex: none;
  height: 41px;
  border-top: 3px solid #3a3a3a;
  background: linear-gradient(90deg, #272d2d, #302f2c 30%, #382f2a 50%, #352e2a 70%, #2d3029 80%, #33352a);
}
.start { width: 45px; }
.search {
  display: flex;
  align-items: center;
  width: 270px;
  padding: 0 3px 0 11px;
  border: 1px solid #666;
  background: #323232;
}
.search input { flex: 1; margin-left: 9px; font-size: 14px; line-height: 20px; }
.search input::placeholder { color: #c4c4c4; opacity: 1; }
.highlight { display: flex; align-items: center; justify-content: center; width: 67px; height: 30px; border-radius: 5px; background: #454545; }
.apps { display: flex; }
.apps button { width: 46px; border-bottom: 2px solid transparent; }
.apps .open { width: 38px; margin: 0 4px; border-color: #78aee0; }
.apps .active { border-color: #78aee0; background: #575653; }
.app-letter { font: bold 10px "Noto Sans", sans-serif; fill: #fff; text-anchor: middle; }
.tray { display: flex; align-items: stretch; margin-left: auto; }
.tray button { width: 23px; }
.tray .weather { width: 60px; gap: 8px; margin-right: 18px; font-size: 14px; }
.tray .clock { width: 58px; flex-direction: column; font-size: 11px; line-height: 17px; }
.tray .notif { width: 48px; padding-left: 5px; }
.badge { font: bold 11px "Noto Sans", sans-serif; fill: #fff; text-anchor: middle; }
.desktop-edge { width: 5px; border-left: 1px solid #77776f; }
```
